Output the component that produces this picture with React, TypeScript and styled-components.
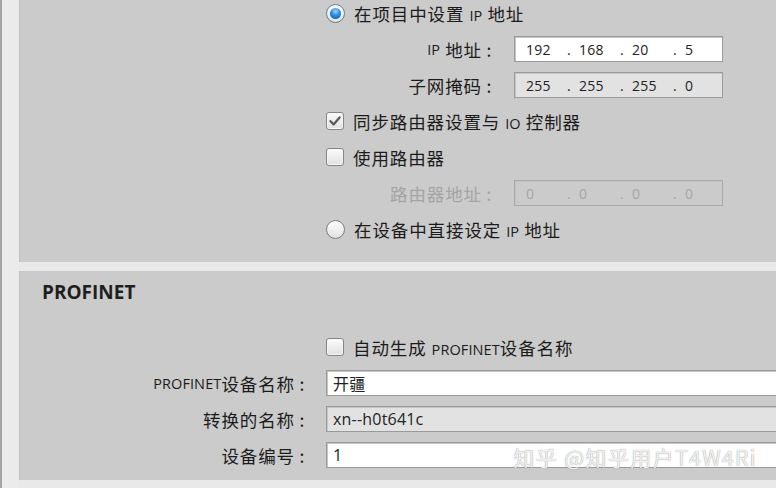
import React from "react";
import styled, { createGlobalStyle } from "styled-components";

const GlobalStyle = createGlobalStyle`
    html, body {
        margin: 0;
        padding: 0;
    }
    body {
        width: 776px;
        height: 488px;
        overflow: hidden;
        background: #e9e9e9;
        color: #1b1b1b;
        font-family: "Noto Sans CJK SC", "Open Sans", sans-serif;
        font-size: 17.5px;
        letter-spacing: 0.9px;
    }
`

const Page = styled.div`
    position: relative;
    display: flex;
    height: 488px;
    overflow: hidden;
`

const Rail = styled.div`
    flex: none;
    width: 17px;
    border-left: 2px solid #a4a4a4;
    background: #ebebeb;
`

const Main = styled.div`
    flex: 1;
    display: flex;
    flex-direction: column;
    gap: 9px;
    background: #e9e9e9;
    min-width: 0;
`

const Panel = styled.section<{ $height: number }>`
    height: ${p => p.$height}px;
    box-sizing: border-box;
    background: #cbcbcb;
    border-left: 1px solid #c1c1c1;
    overflow: hidden;
`

const TopForm = styled.div`
    display: flex;
    flex-direction: column;
    gap: 10px;
    padding-left: 306px;
`

const Row = styled.div`
    display: flex;
    align-items: center;
    gap: 9px;
    height: 26px;
    white-space: nowrap;
`

const Latin = styled.span<{ $gap?: boolean }>`
    font-family: "Open Sans", sans-serif;
    font-size: 14.5px;
    letter-spacing: 0.1px;
    margin: 0 ${p => (p.$gap ? "5px" : "0")};
`

const Label = styled.div<{ $width: number; $muted?: boolean }>`
    flex: none;
    width: ${p => p.$width}px;
    display: flex;
    justify-content: flex-end;
    align-items: center;
    white-space: nowrap;
    color: ${p => (p.$muted ? "#a4a4a4" : "#1b1b1b")};
`

const Colon = styled.span`
    display: inline-block;
    width: 14px;
    text-align: center;
    letter-spacing: 0;
`

const Field = styled.div<{ $tone: "edit" | "readonly" | "disabled"; $width?: number }>`
    flex: none;
    box-sizing: border-box;
    height: 26px;
    width: ${p => (p.$width ? `${p.$width}px` : "calc(100% + 12px)")};
    display: flex;
    align-items: center;
    padding-left: 6px;
    border: 1px solid ${p => (p.$tone === "disabled" ? "#a9a9a9" : "#9a9a9a")};
    box-shadow: inset 1px 1px 0 ${p => (p.$tone === "disabled" ? "#c2c2c2" : "#c6c6c6")};
    background: ${p =>
        p.$tone === "edit" ? "#ffffff" : p.$tone === "readonly" ? "#e2e2e2" : "#cbcbcb"};
    color: ${p => (p.$tone === "disabled" ? "#a6a6a6" : "#222")};
    font-family: "Open Sans", "Noto Sans CJK SC", sans-serif;
    font-size: 16px;
    letter-spacing: 0.2px;
    white-space: nowrap;
`

const Octet = styled.span`
    width: 53px;
    flex: none;
    display: flex;
    justify-content: space-between;
    padding-right: 8px;
    box-sizing: border-box;
    font-size: 14px;
`

const Radio = styled.span<{ $on?: boolean }>`
    position: relative;
    flex: none;
    width: 19px;
    height: 19px;
    box-sizing: border-box;
    border-radius: 50%;
    border: 1px solid ${p => (p.$on ? "#5e7f9c" : "#7c7c7c")};
    background: linear-gradient(#fdfdfd, #e2e2e2);

    &::after {
        content: "";
        display: ${p => (p.$on ? "block" : "none")};
        position: absolute;
        inset: 3px;
        border-radius: 50%;
        background: radial-gradient(circle at 50% 30%, #9fd6ff 0%, #2a8be0 45%, #0b5aa6 100%);
    }
`

const Box = styled.span`
    flex: none;
    width: 18px;
    height: 18px;
    box-sizing: border-box;
    border-radius: 3px;
    border: 1px solid #858585;
    background: linear-gradient(#fcfcfc, #e0e0e0);
    box-shadow: inset 0 0 0 1px #f6f6f6;
    display: flex;
    align-items: center;
    justify-content: center;
`

const Heading = styled.h2`
    margin: 9px 0 30px 22px;
    height: 24px;
    line-height: 24px;
    font-family: "Open Sans", sans-serif;
    font-weight: 700;
    font-size: 19px;
    letter-spacing: 0;
    color: #1f1f1f;
`

const FormGrid = styled.div`
    display: grid;
    grid-template-columns: 289px 1fr;
    column-gap: 17px;
    row-gap: 10px;
    grid-auto-rows: 26px;
    align-items: center;
`

const Watermark = styled.div`
    position: absolute;
    right: 19px;
    bottom: 16px;
    font-family: "Noto Sans CJK SC", sans-serif;
    font-size: 21px;
    letter-spacing: 1.4px;
    color: rgba(255, 255, 255, 0.9);
    text-shadow: 0 0 1px rgba(60, 60, 60, 0.7);
    pointer-events: none;
`

const CheckBox = ({ checked }: { checked?: boolean }) => (
    <Box>
        {checked && (
            <svg width="14" height="14" viewBox="0 0 14 14">
                <path d="M2.5 7.2 L5.6 10.4 L11.6 3.4" fill="none" stroke="#5a5a5a" strokeWidth="2.3" strokeLinecap="round" strokeLinejoin="round" />
            </svg>
        )}
    </Box>
)

const IpField = ({ parts, tone }: { parts: string[]; tone: "edit" | "readonly" | "disabled" }) => (
    <Field $tone={tone} $width={209} style={{ marginLeft: 18, paddingLeft: 11 }}>
        {parts.map((part, i) => (
            <Octet key={i}>
                <span>{part}</span>
                {i < 3 && <span>.</span>}
            </Octet>
        ))}
    </Field>
)

const App = () => {
    return (
        <Page>
            <GlobalStyle />
            <Rail />
            <Main>
                <Panel $height={262}>
                    <TopForm>
                        <Row>
                            <Radio $on />
                            <span>在项目中设置<Latin $gap>IP</Latin>地址</span>
                        </Row>
                        <Row style={{ gap: 0 }}>
                            <Label $width={170}>
                                <Latin $gap>IP</Latin>地址<Colon>:</Colon>
                            </Label>
                            <IpField parts={["192", "168", "20", "5"]} tone="edit" />
                        </Row>
                        <Row style={{ gap: 0 }}>
                            <Label $width={170}>
                                子网掩码<Colon>:</Colon>
                            </Label>
                            <IpField parts={["255", "255", "255", "0"]} tone="readonly" />
                        </Row>
                        <Row>
                            <CheckBox checked />
                            <span>同步路由器设置与<Latin $gap>IO</Latin>控制器</span>
                        </Row>
                        <Row>
                            <CheckBox />
                            <span>使用路由器</span>
                        </Row>
                        <Row style={{ gap: 0 }}>
                            <Label $width={170} $muted>
                                路由器地址<Colon>:</Colon>
                            </Label>
                            <IpField parts={["0", "0", "0", "0"]} tone="disabled" />
                        </Row>
                        <Row>
                            <Radio />
                            <span>在设备中直接设定<Latin $gap>IP</Latin>地址</span>
                        </Row>
                    </TopForm>
                </Panel>
                <Panel $height={209}>
                    <Heading>PROFINET</Heading>
                    <FormGrid>
                        <span />
                        <Row>
                            <CheckBox />
                            <span>自动生成<Latin style={{ marginLeft: 5 }}>PROFINET</Latin>设备名称</span>
                        </Row>
                        <Label $width={289}>
                            <Latin>PROFINET</Latin>设备名称<Colon>:</Colon>
                        </Label>
                        <Field $tone="edit">开疆</Field>
                        <Label $width={289}>
                            转换的名称<Colon>:</Colon>
                        </Label>
                        <Field $tone="readonly">xn--h0t641c</Field>
                        <Label $width={289}>
                            设备编号<Colon>:</Colon>
                        </Label>
                        <Field $tone="edit">1</Field>
                    </FormGrid>
                </Panel>
            </Main>
            <Watermark>知乎 @知乎用户T4W4Ri</Watermark>
        </Page>
    )
};

export default App;
